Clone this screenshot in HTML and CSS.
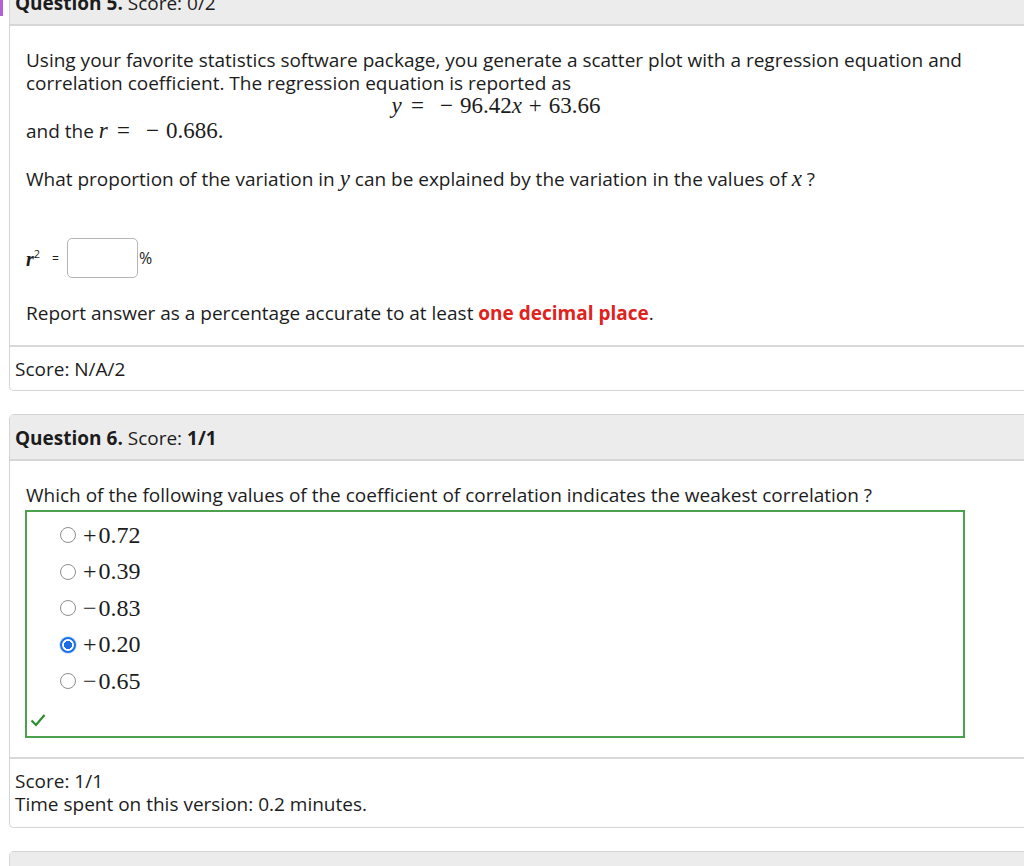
FILE: index.html
```html
<!DOCTYPE html>
<html>
<head>
<meta charset="utf-8">
<link rel="stylesheet" href="styles.css">
</head>
<body>
<div class="accent"></div>
<div class="page">
  <section class="card first">
    <div class="card-head"><b>Question 5.</b> Score: 0/2</div>
    <div class="card-body">
      <p class="para">Using your favorite statistics software package, you generate a scatter plot with a regression equation and correlation coefficient. The regression equation is reported as</p>
      <div class="eq"><i>y</i><span class="rel">=</span><span class="bin">&minus;</span>96.42<i>x</i><span class="bin">+</span>63.66</div>
      <p class="para and">and the <span class="m"><i>r</i><span class="rel">=</span><span class="bin">&minus;</span>0.686.</span></p>
      <p class="para q">What proportion of the variation in <span class="m"><i>y</i></span> can be explained by the variation in the values of <span class="m"><i>x</i></span> ?</p>
      <div class="answer-row">
        <span class="rlabel"><i>r</i><sup>2</sup></span>
        <span class="eqs">=</span>
        <span class="inbox"></span>
        <span class="pct">%</span>
      </div>
      <p class="para report">Report answer as a percentage accurate to at least <span class="red">one decimal place</span>.</p>
    </div>
    <div class="card-foot">Score: N/A/2</div>
  </section>

  <section class="card">
    <div class="card-head"><b>Question 6.</b> Score: <b>1/1</b></div>
    <div class="card-body">
      <p class="para">Which of the following values of the coefficient of correlation indicates the weakest correlation ?</p>
      <div class="choices">
        <ul class="opts">
          <li><span class="radio"></span><span class="m opt"><span class="sg">+</span>0.72</span></li>
          <li><span class="radio"></span><span class="m opt"><span class="sg">+</span>0.39</span></li>
          <li><span class="radio"></span><span class="m opt"><span class="sg">&minus;</span>0.83</span></li>
          <li><span class="radio on"></span><span class="m opt"><span class="sg">+</span>0.20</span></li>
          <li><span class="radio"></span><span class="m opt"><span class="sg">&minus;</span>0.65</span></li>
        </ul>
        <svg class="check" width="16" height="14" viewBox="0 0 16 14"><path d="M1.5 7.5 L6 12 L14.5 2" fill="none" stroke="#2e8b2e" stroke-width="2.2"/></svg>
      </div>
    </div>
    <div class="card-foot two">Score: 1/1<br>Time spent on this version: 0.2 minutes.</div>
  </section>

  <section class="card last">
    <div class="card-head"></div>
  </section>
</div>
</body>
</html>
```
FILE: styles.css
```css
html, body { margin: 0; padding: 0; }
body {
  background: #fff;
  overflow: hidden;
  width: 1024px;
  height: 866px;
  position: relative;
  font-family: "Open Sans", "Noto Sans", sans-serif;
  font-size: 19px;
  color: #1c1c1c;
}
.accent {
  position: absolute;
  left: 0; top: 0;
  width: 3px; height: 16px;
  background: #b45fd6;
}
.page {
  padding-left: 9px;
  width: 1100px;
}
.card {
  border: 1px solid #d4d4d4;
  border-right: none;
  border-radius: 5px 0 0 5px;
  margin-bottom: 23px;
  background: #fff;
}
.card.first {
  margin-top: -20px;
  border-top: none;
}
.card-head {
  background: #ececec;
  border-bottom: 2px solid #d6d6d6;
  height: 44px;
  line-height: 46px;
  padding-left: 5px;
}
.card-head b { font-weight: 700; }
.card-body {
  padding: 23px 16px 0 16px;
  border-bottom: 2px solid #d8d8d8;
}
.para { margin: 0; line-height: 23px; width: 940px; }
.m, .eq {
  font-family: "Liberation Serif", "DejaVu Serif", serif;
  font-size: 23px;
}
.eq {
  text-align: center;
  width: 940px;
  line-height: 22px;
  box-sizing: border-box;
}
.rel { margin: 0 0.4em; }
.bin { margin: 0 0.3em; }
.and { margin-top: 2px; }
.q { margin-top: 24px; }
.answer-row {
  display: flex;
  align-items: center;
  margin-top: 47px;
  height: 40px;
}
.rlabel {
  font-family: "Liberation Serif", serif;
  font-size: 20px;
  font-weight: 700;
  width: 26px;
}
.rlabel sup { font-size: 11px; font-style: normal; font-weight: 400; font-family: "Open Sans", sans-serif; }
.eqs { font-size: 12px; width: 15px; }
.inbox {
  width: 71px; height: 40px;
  border: 1px solid #b5b5b5;
  border-radius: 5px;
  box-sizing: border-box;
  display: inline-block;
}
.pct { font-size: 16px; margin-left: 1px; }
.report { margin-top: 24px; padding-bottom: 20px; }
.red { color: #e0211c; font-weight: 700; }
.card-foot {
  padding: 11px 5px 9px 5px;
  line-height: 23px;
}
.card-foot.two { padding-bottom: 11px; }
.choices {
  margin-top: 3px;
  margin-left: -1px;
  border: 2px solid #4ca14c;
  width: 940px;
  box-sizing: border-box;
  height: 228px;
  position: relative;
  margin-bottom: 19px;
}
.opts { list-style: none; margin: 0; padding: 5px 0 0 33px; }
.opts li {
  height: 36.5px;
  display: flex;
  align-items: center;
}
.opt { font-size: 24px; }
.sg { margin-right: 2px; }
.radio {
  width: 16px; height: 16px;
  border: 1px solid #8f8f8f;
  border-radius: 50%;
  box-sizing: border-box;
  margin-right: 7px;
  display: inline-block;
}
.radio.on {
  border: 2px solid #1a6ee8;
  background: radial-gradient(circle, #1a6ee8 0 3.8px, #fff 4.3px);
  box-shadow: 0 0 0 1px #cfe0fb;
}
.check { position: absolute; left: 3px; bottom: 9px; }
.card.last { border-bottom: none; }
.card.last .card-head { height: 20px; border-bottom: none; }
```
